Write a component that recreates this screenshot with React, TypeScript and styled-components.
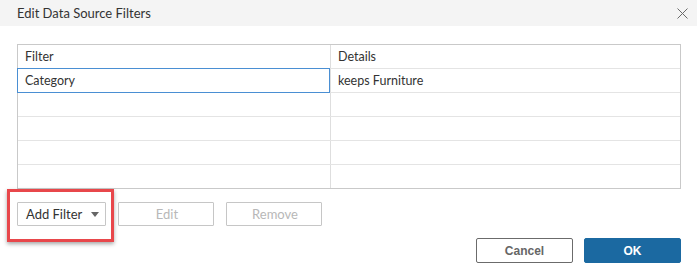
import React from "react";
import styled, { createGlobalStyle } from "styled-components";

const Global = createGlobalStyle`
  html, body { margin: 0; padding: 0; background: #ffffff; }
  * { box-sizing: border-box; }
`;

const Dialog = styled.div`
  position: relative;
  width: 697px;
  height: 275px;
  background: #ffffff;
  font-family: Lato, "Noto Sans", sans-serif;
  color: #333333;
  display: flex;
  flex-direction: column;
`;

const Header = styled.div`
  height: 26px;
  background: #f4f4f4;
  display: flex;
  align-items: center;
  justify-content: space-between;
  padding: 0 9px 0 17px;
`;

const Title = styled.div`
  font-size: 13px;
  color: #333333;
`;

const CloseButton = styled.button`
  width: 12px;
  height: 12px;
  padding: 0;
  border: none;
  background: transparent;
  display: flex;
  align-items: center;
  justify-content: center;
`;

const Body = styled.div`
  padding: 18px 16px 0 17px;
  display: flex;
  flex-direction: column;
`;

const Table = styled.div`
  border: 1px solid #c9c9c9;
  display: flex;
  flex-direction: column;
`;

const Row = styled.div<{ $last?: boolean }>`
  display: grid;
  grid-template-columns: 313px 1fr;
  height: ${(p) => (p.$last ? "23px" : "24px")};
  border-bottom: ${(p) => (p.$last ? "none" : "1px solid #e4e4e4")};
`;

const Cell = styled.div<{ $selected?: boolean; $first?: boolean }>`
  position: relative;
  display: flex;
  align-items: center;
  padding-left: 7px;
  font-size: 12.5px;
  color: #333333;
  border-right: ${(p) => (p.$first ? "1px solid #dedede" : "none")};
  &::after {
    content: "";
    display: ${(p) => (p.$selected ? "block" : "none")};
    position: absolute;
    top: -1px;
    left: -1px;
    right: 0;
    bottom: -1px;
    border: 1px solid #4a8fd3;
  }
`;

const ActionRow = styled.div`
  margin-top: 13px;
  display: flex;
  gap: 12px;
`;

const ToolButton = styled.button<{ $width: number; $disabled?: boolean }>`
  width: ${(p) => p.$width}px;
  height: 24px;
  background: #ffffff;
  border: 1px solid #c6c6c6;
  border-radius: 1px;
  font-family: Lato, "Noto Sans", sans-serif;
  font-size: 13px;
  color: ${(p) => (p.$disabled ? "#b8b8b8" : "#333333")};
  display: flex;
  align-items: center;
  justify-content: ${(p) => (p.$disabled ? "center" : "space-between")};
  padding: 0 6px 0 8px;
`;

const Caret = styled.span`
  width: 0;
  height: 0;
  border-left: 4px solid transparent;
  border-right: 4px solid transparent;
  border-top: 5px solid #666666;
`;

const Footer = styled.div`
  margin-top: 12px;
  padding-right: 16px;
  display: flex;
  justify-content: flex-end;
  gap: 11px;
`;

const DialogButton = styled.button<{ $primary?: boolean }>`
  width: 97px;
  height: 25px;
  border-radius: 2px;
  font-family: "Liberation Sans", Arial, sans-serif;
  font-weight: bold;
  font-size: 12px;
  border: 1px solid ${(p) => (p.$primary ? "#1b69a1" : "#6b6b6b")};
  background: ${(p) => (p.$primary ? "#1b69a1" : "#ffffff")};
  color: ${(p) => (p.$primary ? "#ffffff" : "#666666")};
`;

const Highlight = styled.div`
  position: absolute;
  left: 7px;
  top: 189px;
  width: 107px;
  height: 53px;
  border: 3px solid #e8474b;
  box-shadow: 0 2px 4px rgba(0, 0, 0, 0.35);
  pointer-events: none;
`;

const rows = [
  { filter: "Category", details: "keeps Furniture", selected: true },
  { filter: "", details: "" },
  { filter: "", details: "" },
  { filter: "", details: "" },
  { filter: "", details: "" },
];

export default function App() {
  return (
    <>
      <Global />
      <Dialog>
        <Header>
          <Title>Edit Data Source Filters</Title>
          <CloseButton aria-label="Close">
            <svg width="11" height="11" viewBox="0 0 11 11">
              <path d="M0.5 0.5 L10.5 10.5 M10.5 0.5 L0.5 10.5" stroke="#6a6a6a" strokeWidth="1" />
            </svg>
          </CloseButton>
        </Header>
        <Body>
          <Table>
            <Row>
              <Cell $first>Filter</Cell>
              <Cell>Details</Cell>
            </Row>
            {rows.map((r, i) => (
              <Row key={i} $last={i === rows.length - 1}>
                <Cell $first $selected={r.selected}>
                  {r.filter}
                </Cell>
                <Cell>{r.details}</Cell>
              </Row>
            ))}
          </Table>
          <ActionRow>
            <ToolButton $width={89}>
              Add Filter
              <Caret />
            </ToolButton>
            <ToolButton $width={96} $disabled>
              Edit
            </ToolButton>
            <ToolButton $width={96} $disabled>
              Remove
            </ToolButton>
          </ActionRow>
        </Body>
        <Footer>
          <DialogButton>Cancel</DialogButton>
          <DialogButton $primary>OK</DialogButton>
        </Footer>
        <Highlight />
      </Dialog>
    </>
  );
}
